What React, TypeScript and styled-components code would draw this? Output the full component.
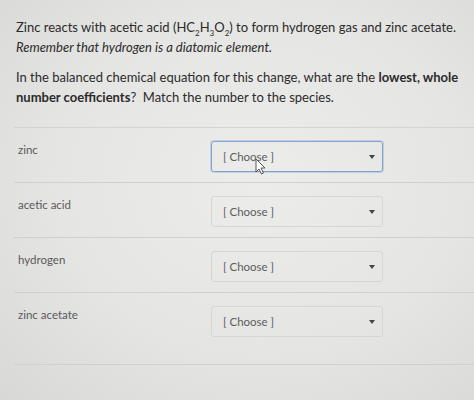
import styled, { createGlobalStyle } from 'styled-components';

const GlobalStyle = createGlobalStyle`
    html, body {
        margin: 0;
        padding: 0;
    }
    body {
        width: 474px;
        height: 400px;
        overflow: hidden;
        font-family: Lato, "Open Sans", sans-serif;
        background: radial-gradient(ellipse at 55% 45%, #ececea 0%, #e5e5e3 55%, #d8d8d6 100%);
    }
`;

const Page = styled.div`
    height: 400px;
    padding-top: 17px;
    box-sizing: border-box;
`;

const Question = styled.div`
    padding: 0 8px 0 16px;
    color: #2b2b2b;
    font-size: 13px;
    line-height: 20px;
    p {
        margin: 0 0 10px;
    }
    sub {
        font-size: 8px;
        line-height: 0;
    }
`;

const Note = styled.em`
    font-style: italic;
    display: block;
`;

const Answers = styled.div`
    margin-top: 20px;
    margin-left: 14px;
    border-top: 1px solid #d3d3d1;
`;

const Row = styled.div<{ $last?: boolean }>`
    display: flex;
    align-items: flex-start;
    padding: 13px 0 ${(p) => (p.$last ? '27px' : '10px')};
    border-bottom: 1px solid #d0d0ce;
`;

const Label = styled.div`
    width: 193px;
    padding-left: 4px;
    padding-top: 2px;
    font-size: 11.5px;
    color: #5a5a5a;
`;

const Select = styled.div<{ $focused?: boolean }>`
    position: relative;
    width: 172px;
    height: 31px;
    box-sizing: border-box;
    display: flex;
    align-items: center;
    justify-content: space-between;
    padding: 0 7px 0 11px;
    border: 1px solid ${(p) => (p.$focused ? '#7fa3cf' : '#d6d6d4')};
    border-radius: 3px;
    box-shadow: ${(p) => (p.$focused ? '0 0 0 1px rgba(120,160,210,0.35)' : 'none')};
    font-size: 11.5px;
    color: #5c5c5c;
`;

const Arrow = styled.span`
    width: 0;
    height: 0;
    border-left: 3px solid transparent;
    border-right: 3px solid transparent;
    border-top: 4px solid #444;
`;

const Cursor = styled.svg`
    position: absolute;
    left: 43px;
    top: 16px;
`;

const species = ['zinc', 'acetic acid', 'hydrogen', 'zinc acetate'];

function App() {
    return (
        <Page>
            <GlobalStyle />
            <Question>
                <p>
                    Zinc reacts with acetic acid (HC<sub>2</sub>H<sub>3</sub>O<sub>2</sub>) to form hydrogen gas and zinc acetate.
                    <Note>Remember that hydrogen is a diatomic element.</Note>
                </p>
                <p>
                    In the balanced chemical equation for this change, what are the <b>lowest, whole</b> <b>number coefficients</b>?&nbsp; Match the number to the species.
                </p>
            </Question>
            <Answers>
                {species.map((name, i) => (
                    <Row key={name} $last={i === species.length - 1}>
                        <Label>{name}</Label>
                        <Select $focused={i === 0}>
                            [ Choose ]
                            <Arrow />
                            {i === 0 && (
                                <Cursor width="12" height="17" viewBox="0 0 12 17">
                                    <path d="M1 1 L1 14 L4 11 L6.5 16 L8.5 15 L6 10 L10 10 Z" fill="#fff" stroke="#555" strokeWidth="1" />
                                </Cursor>
                            )}
                        </Select>
                    </Row>
                ))}
            </Answers>
        </Page>
    );
}

export default App;
